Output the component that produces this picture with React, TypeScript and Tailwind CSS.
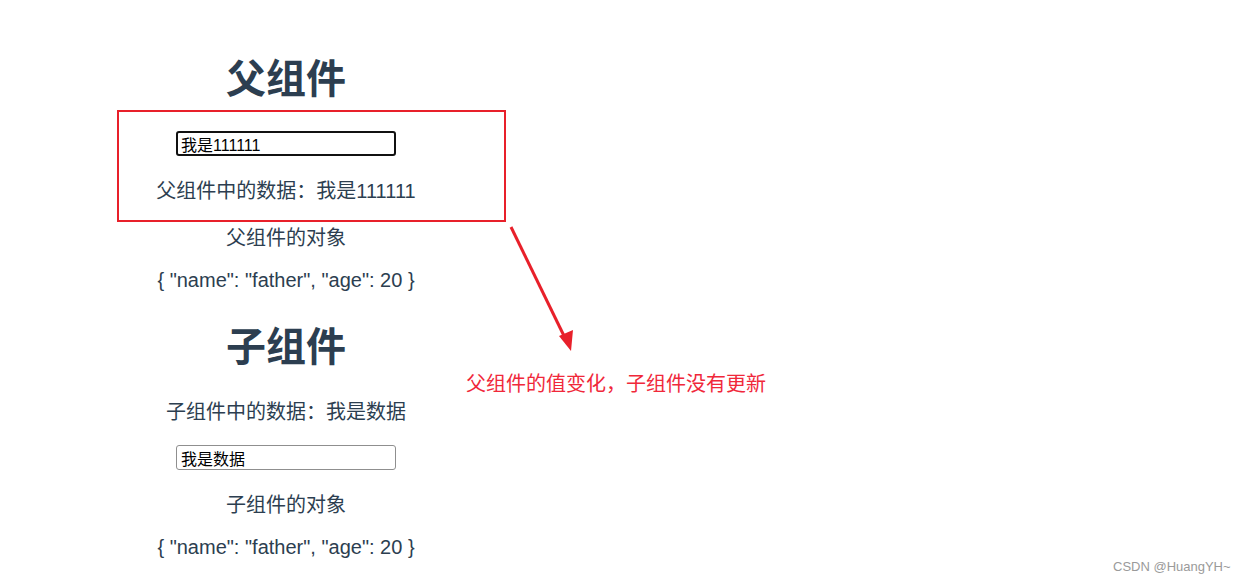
export default function App() {
  const font = { fontFamily: '"Liberation Sans", "Noto Sans CJK SC", sans-serif' }
  return (
    <div className="relative h-[584px] w-[1243px] overflow-hidden bg-white text-[#2c3e50]" style={font}>
      <div className="flex w-[572px] flex-col items-center text-center">
        <h1 className="mt-[57px] text-[40px] font-bold leading-[44px]">父组件</h1>
        <input
          readOnly
          value="我是111111"
          className="mt-[30px] h-[25px] w-[220px] rounded-[3px] border-2 border-[#111] px-[3px] text-[16px] text-black outline-none"
        />
        <p className="mt-[24px] text-[20px] leading-[22px]">父组件中的数据：我是111111</p>
        <p className="mt-[25px] text-[20px] leading-[22px]">父组件的对象</p>
        <p className="mt-[20px] text-[20px] leading-[22px]">{'{ "name": "father", "age": 20 }'}</p>

        <h1 className="mt-[34px] text-[40px] font-bold leading-[44px]">子组件</h1>
        <p className="mt-[32px] text-[20px] leading-[22px]">子组件中的数据：我是数据</p>
        <input
          readOnly
          value="我是数据"
          className="mt-[22px] h-[25px] w-[220px] rounded-[3px] border border-[#8f8f8f] px-[4px] text-[16px] text-black outline-none"
        />
        <p className="mt-[24px] text-[20px] leading-[22px]">子组件的对象</p>
        <p className="mt-[20px] text-[20px] leading-[22px]">{'{ "name": "father", "age": 20 }'}</p>
      </div>

      {/* annotation */}
      <div className="absolute left-[117px] top-[110px] h-[112px] w-[389px] border-2 border-[#e8202a]" />
      <svg className="absolute left-0 top-0" width="1243" height="584">
        <line x1="511" y1="227" x2="566" y2="340" stroke="#e8202a" strokeWidth="3" />
        <polygon points="571,351 559,336 573,330" fill="#e8202a" />
      </svg>
      <div className="absolute left-[466px] top-[372px] text-[20px] leading-[24px] text-[#f0283a]">
        父组件的值变化，子组件没有更新
      </div>

      <div className="absolute left-[1113px] top-[559px] text-[13px] leading-[16px] text-[#9a9a9a]">CSDN @HuangYH~</div>
    </div>
  )
}
